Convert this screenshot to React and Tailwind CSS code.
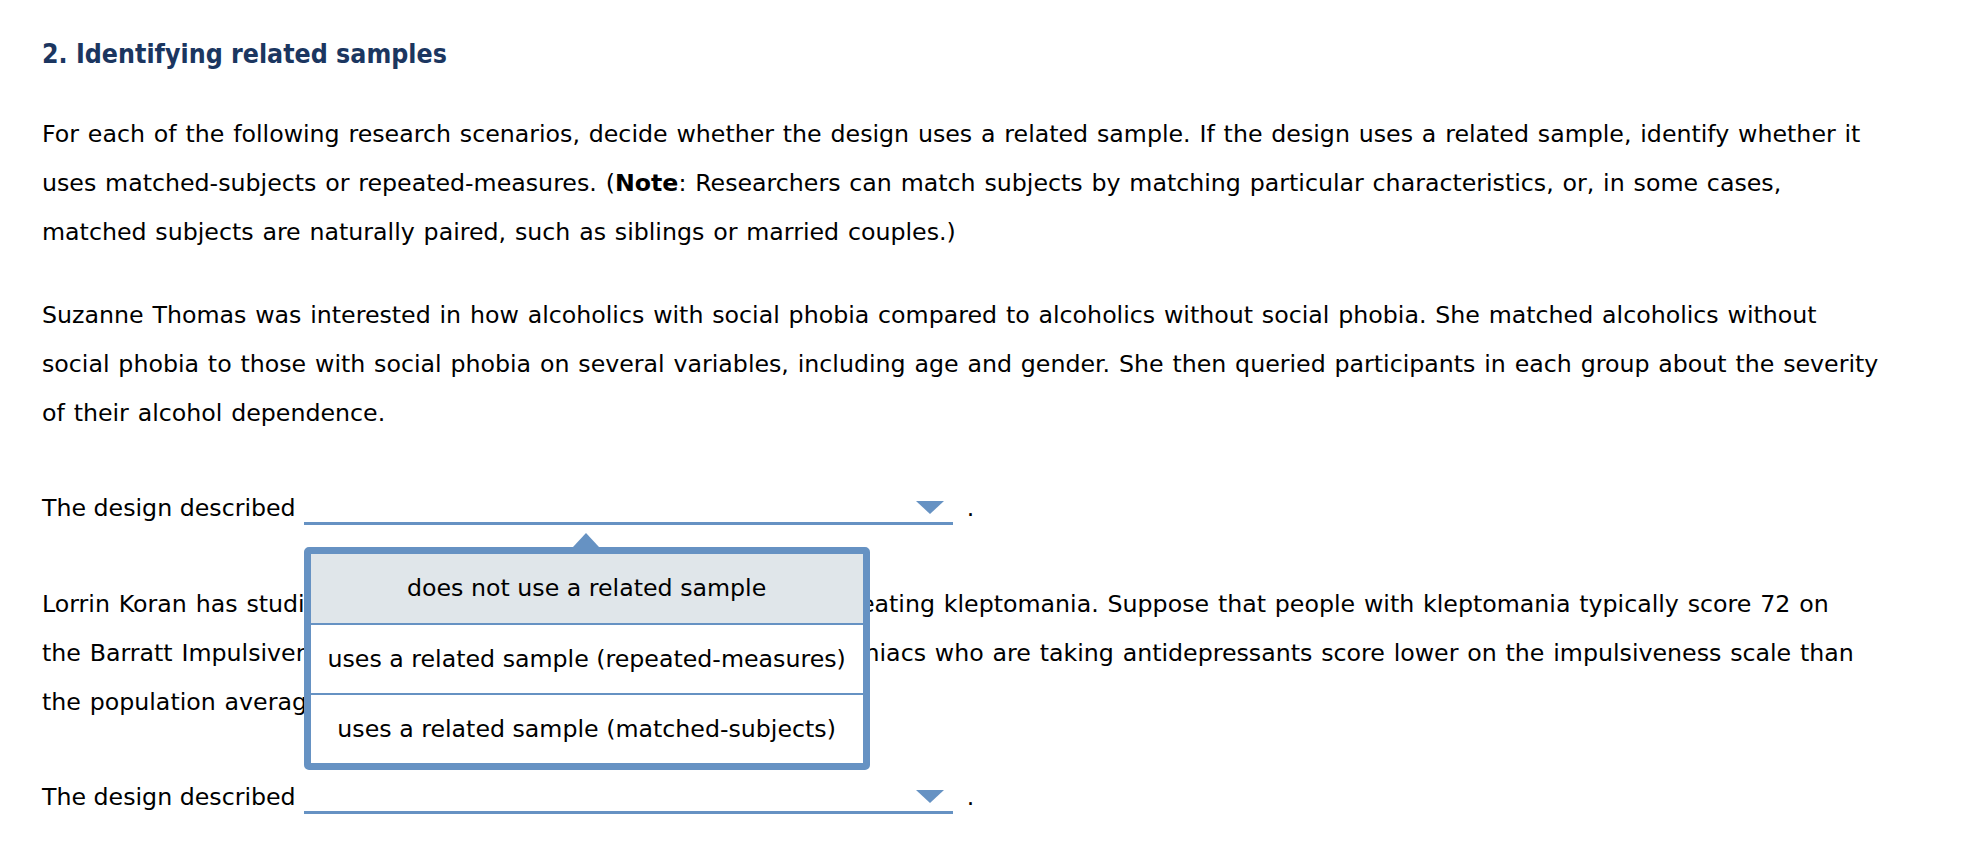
const options = [
  'does not use a related sample',
  'uses a related sample (repeated-measures)',
  'uses a related sample (matched-subjects)',
];

function Dropdown() {
  return (
    <div className="absolute left-0 top-[49px] z-10 w-[566px]">
      <svg width="26" height="14" viewBox="0 0 26 14" className="ml-[269px] block">
        <path d="M0 14L13 0L26 14Z" fill="#6692c3" />
      </svg>
      <ul className="overflow-hidden rounded-[5px] border-[7px] border-[#6692c3] bg-white">
        {options.map((o, i) => (
          <li
            key={o}
            className={
              i === 0
                ? 'flex h-[69px] items-center justify-center whitespace-nowrap bg-[#e0e6ea] [word-spacing:0]'
                : 'flex h-[70px] items-center justify-center whitespace-nowrap border-t-2 border-[#6692c3] [word-spacing:0]'
            }
          >
            {o}
          </li>
        ))}
      </ul>
    </div>
  );
}

function DesignRow({ open }) {
  return (
    <div className="flex h-[49px] items-start leading-[49px] [word-spacing:0]">
      <span>The design described</span>
      <span className="relative ml-[8px] flex h-[41px] w-[649px] items-start justify-end border-b-[3px] border-[#6692c3] pr-[9px] pt-[17px]">
        <svg width="28" height="13" viewBox="0 0 28 13" className="block">
          <path d="M0 0H28L14 13Z" fill="#6692c3" />
        </svg>
        {open && <Dropdown />}
      </span>
      <span className="ml-[14px]">.</span>
    </div>
  );
}

export default function App() {
  return (
    <div className="min-h-[847px] bg-white px-[42px] font-['DejaVu_Sans','Verdana',sans-serif] text-[23.7px] text-black [word-spacing:1.3px]">
      <h2 className="pt-[38px] font-['DejaVu_Sans_Condensed','DejaVu_Sans',sans-serif] text-[26.5px] font-bold leading-[32px] text-[#1b3660] [word-spacing:0]">
        2. Identifying related samples
      </h2>

      <div className="w-[1879px]">
        <p className="mt-[40px] leading-[49px]">
          For each of the following research scenarios, decide whether the design uses a related sample. If the design uses a related sample, identify whether it<br />
          uses matched-subjects or repeated-measures. (<b>Note</b>: Researchers can match subjects by matching particular characteristics, or, in some cases,<br />
          matched subjects are naturally paired, such as siblings or married couples.)
        </p>

        <p className="mt-[34px] leading-[49px]">
          Suzanne Thomas was interested in how alcoholics with social phobia compared to alcoholics without social phobia. She matched alcoholics without<br />
          social phobia to those with social phobia on several variables, including age and gender. She then queried participants in each group about the severity<br />
          of their alcohol dependence.
        </p>

        <div className="mt-[46px]">
          <DesignRow open />
        </div>

        <p className="mt-[47px] leading-[49px]">
          Lorrin Koran has studied <span className="[word-spacing:3.9px]">the effectiveness of antidepressants for </span>treating kleptomania. Suppose that people with kleptomania typically score 72 on<br />
          the Barratt Impulsiveness <span className="[word-spacing:3.5px]">Scale (BIS). Koran predicts that </span>kleptomaniacs who are taking antidepressants score lower on the impulsiveness scale than<br />
          the population average.
        </p>

        <div className="mt-[46px]">
          <DesignRow />
        </div>
      </div>
    </div>
  );
}
